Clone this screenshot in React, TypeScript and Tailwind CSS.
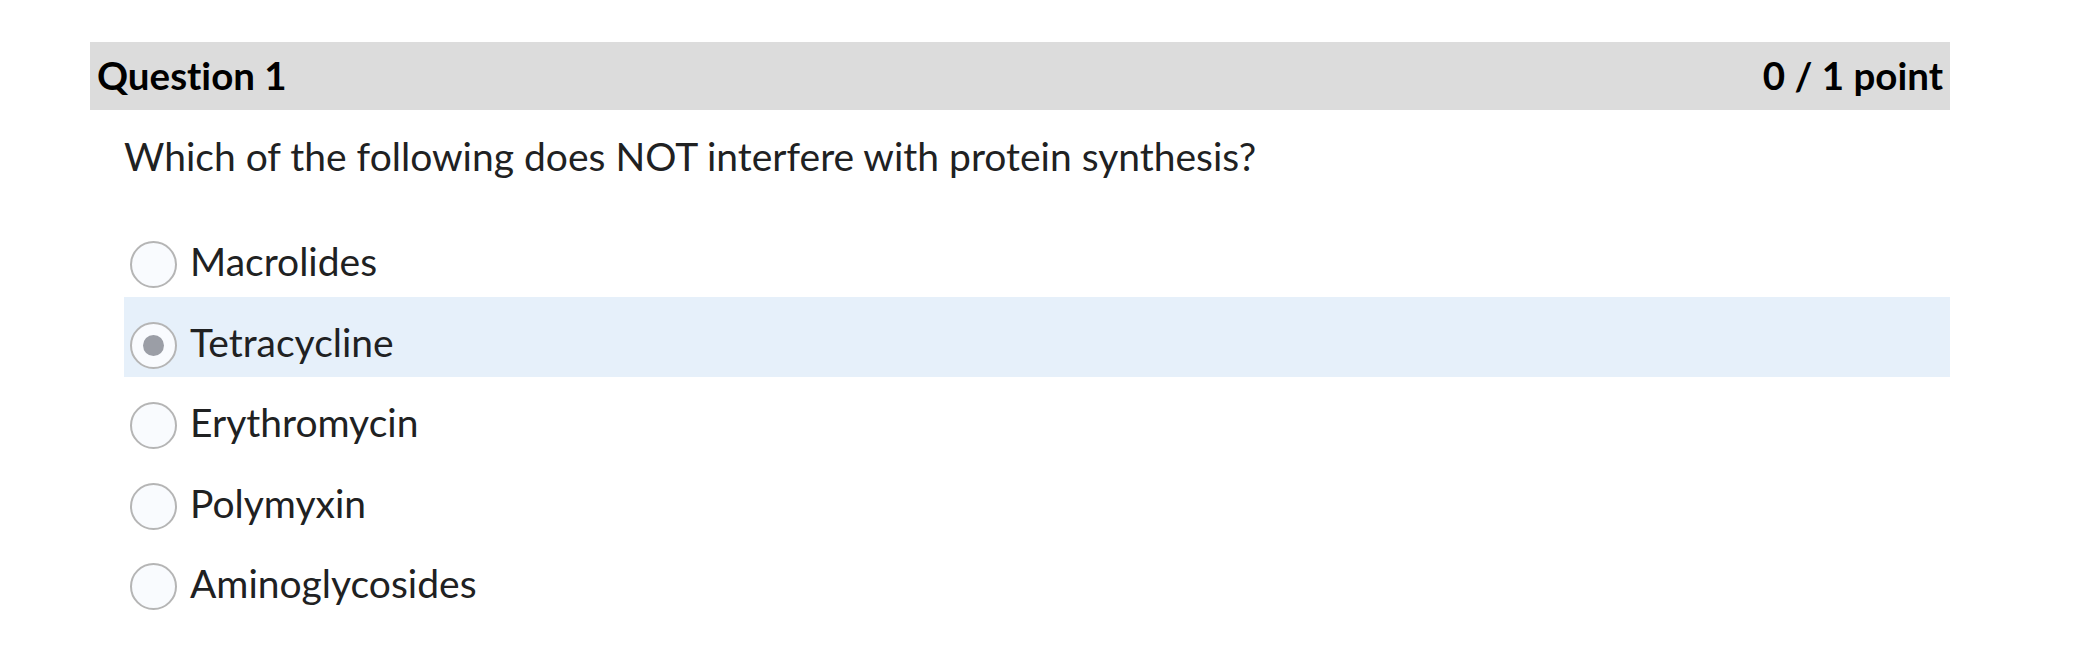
import React from 'react';

const options = ['Macrolides', 'Tetracycline', 'Erythromycin', 'Polymyxin', 'Aminoglycosides'];

function Radio({ checked }: { checked: boolean }) {
  return (
    <span className="flex h-[47px] w-[47px] shrink-0 items-center justify-center rounded-full border-2 border-[#b5b5b5] bg-[#f9fbfe]">
      {checked && <span className="h-[21px] w-[21px] rounded-full bg-[#9b9ea6]" />}
    </span>
  );
}

export default function App() {
  const selected = 'Tetracycline';

  return (
    <div className="min-h-[646px] w-[2094px] bg-white font-['Lato',sans-serif] [font-variant-ligatures:none]">
      <div className="ml-[90px] w-[1860px] pt-[42px]">
        {/* header */}
        <div className="flex h-[68px] items-center justify-between bg-[#dcdcdc] px-[7px] text-[38.5px] font-bold text-black">
          <span>Question 1</span>
          <span>0 / 1 point</span>
        </div>

        <div className="pl-[34px]">
          <p className="mt-[22px] text-[39px] leading-[48px] text-[#202122]">
            Which of the following does NOT interfere with protein synthesis?
          </p>

          <div className="mt-[36px] flex flex-col">
            {options.map(opt => (
              <div
                key={opt}
                className={
                  'flex h-[80.5px] items-start gap-[13px] pl-[6px] pt-[25px] ' +
                  (opt === selected ? 'bg-[#e6f0fa]' : '')
                }
              >
                <Radio checked={opt === selected} />
                <span className="-mt-[3px] text-[39px] leading-[47px] text-[#202122]">{opt}</span>
              </div>
            ))}
          </div>
        </div>
      </div>
    </div>
  );
}
